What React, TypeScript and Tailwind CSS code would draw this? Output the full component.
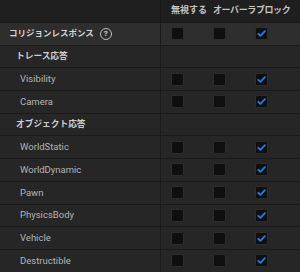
import React from 'react';

type Row = { label: string; kind: 'main' | 'group' | 'item'; checks?: boolean };

const rows: Row[] = [
  { label: 'コリジョンレスポンス', kind: 'main', checks: true },
  { label: 'トレース応答', kind: 'group' },
  { label: 'Visibility', kind: 'item', checks: true },
  { label: 'Camera', kind: 'item', checks: true },
  { label: 'オブジェクト応答', kind: 'group' },
  { label: 'WorldStatic', kind: 'item', checks: true },
  { label: 'WorldDynamic', kind: 'item', checks: true },
  { label: 'Pawn', kind: 'item', checks: true },
  { label: 'PhysicsBody', kind: 'item', checks: true },
  { label: 'Vehicle', kind: 'item', checks: true },
  { label: 'Destructible', kind: 'item', checks: true },
];

const Box = ({ checked }: { checked?: boolean }) => (
  <div className="w-[13px] h-[13px] rounded-[2px] bg-[#0f0f0f] border border-[#2c2c2c] flex items-center justify-center">
    {checked && (
      <svg width="11" height="11" viewBox="0 0 11 11">
        <path d="M2.2 5.8 L4.4 7.9 L8.9 3.2" fill="none" stroke="#1f7fe6" strokeWidth="1.8" strokeLinecap="round" strokeLinejoin="round" />
      </svg>
    )}
  </div>
);

const App = () => {
  return (
    <div className="w-[300px] h-[272px] overflow-hidden bg-[#262626] text-[#c8c8c8]" style={{ fontFamily: 'Roboto, "Noto Sans CJK JP", sans-serif' }}>
      {/* header */}
      <div className="flex h-[22px] bg-[#1f1f1f]">
        <div className="w-[161px] shrink-0 border-r border-[#181818]" />
        <div className="flex items-center pl-[10px] text-[9px] font-semibold text-[#c4c4c4] whitespace-nowrap">
          <span className="w-[42px]">無視する</span>
          <span className="tracking-[-0.4px]">オーバーラブロック</span>
        </div>
      </div>

      {rows.map((row, i) => (
        <div
          key={i}
          className={`flex h-[22.7px] border-t border-[#1a1a1a] ${row.kind === 'main' ? 'bg-[#2e2e2e]' : 'bg-[#262626]'}`}
        >
          <div className="w-[161px] shrink-0 border-r border-[#1a1a1a] flex items-center">
            {row.kind === 'main' && (
              <div className="flex items-center pl-[9px] text-[8.5px] font-semibold text-[#d4d4d4]">
                <span>{row.label}</span>
                <span className="ml-[6px] w-[12px] h-[12px] rounded-full border-[1.5px] border-[#bdbdbd] flex items-center justify-center text-[8px] font-bold leading-none text-[#cfcfcf]">?</span>
              </div>
            )}
            {row.kind === 'group' && (
              <span className="pl-[16px] text-[8.7px] font-semibold text-[#cdcdcd]">{row.label}</span>
            )}
            {row.kind === 'item' && (
              <span className="pl-[20px] text-[9.5px] text-[#b4b4b4]">{row.label}</span>
            )}
          </div>
          {row.checks && (
            <div className="flex items-center pl-[10px] gap-[29px]">
              <Box />
              <Box />
              <Box checked />
            </div>
          )}
        </div>
      ))}
    </div>
  );
};

export default App;
